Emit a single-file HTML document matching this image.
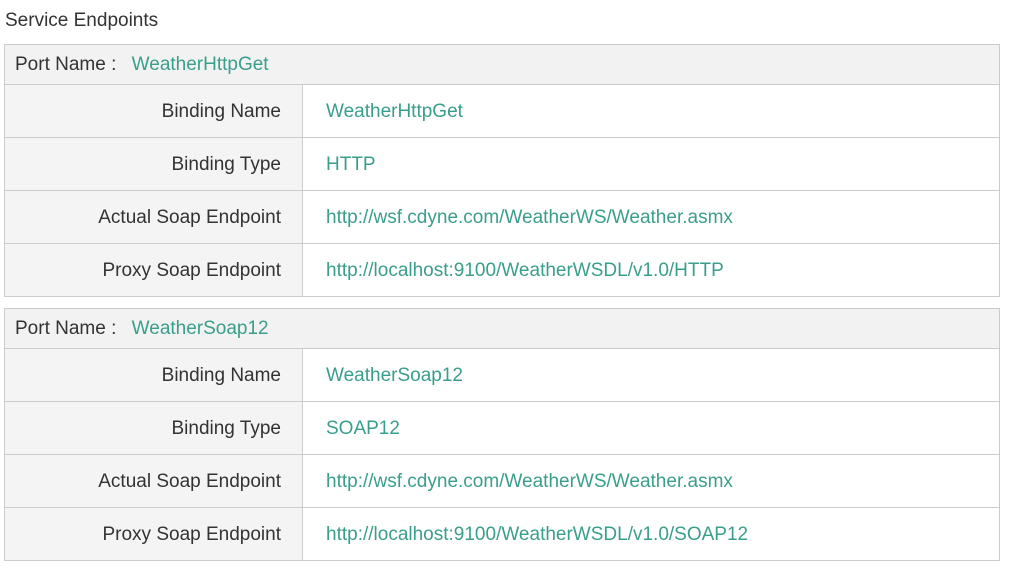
<!DOCTYPE html>
<html><head><style>
body{margin:0;background:#fff;font-family:"Liberation Sans",sans-serif;color:#333;}
.title{position:absolute;left:5px;top:10px;font-size:19px;}
.t{position:absolute;left:4px;width:994px;border:1px solid #ccc;border-bottom:none;}
.h{height:39px;background:#f2f2f2;border-bottom:1px solid #ccc;font-size:19px;line-height:40px;padding-left:10px;}
.h span{color:#3a9e8c;margin-left:10px;}
.r{height:52px;border-bottom:1px solid #ccc;display:flex;font-size:19px;line-height:53px;}
.l{width:276px;background:#f4f4f4;border-right:1px solid #ccc;text-align:right;padding-right:21px;}
.v{padding-left:23px;color:#3a9e8c;}
</style></head><body>
<div class="title">Service Endpoints</div>
<div class="t" style="top:44px">
<div class="h">Port Name : <span>WeatherHttpGet</span></div>
<div class="r"><div class="l">Binding Name</div><div class="v">WeatherHttpGet</div></div>
<div class="r"><div class="l">Binding Type</div><div class="v">HTTP</div></div>
<div class="r"><div class="l">Actual Soap Endpoint</div><div class="v">http://wsf.cdyne.com/WeatherWS/Weather.asmx</div></div>
<div class="r"><div class="l">Proxy Soap Endpoint</div><div class="v">http://localhost:9100/WeatherWSDL/v1.0/HTTP</div></div>
</div>
<div class="t" style="top:308px">
<div class="h">Port Name : <span>WeatherSoap12</span></div>
<div class="r"><div class="l">Binding Name</div><div class="v">WeatherSoap12</div></div>
<div class="r"><div class="l">Binding Type</div><div class="v">SOAP12</div></div>
<div class="r"><div class="l">Actual Soap Endpoint</div><div class="v">http://wsf.cdyne.com/WeatherWS/Weather.asmx</div></div>
<div class="r"><div class="l">Proxy Soap Endpoint</div><div class="v">http://localhost:9100/WeatherWSDL/v1.0/SOAP12</div></div>
</div>
</body></html>
